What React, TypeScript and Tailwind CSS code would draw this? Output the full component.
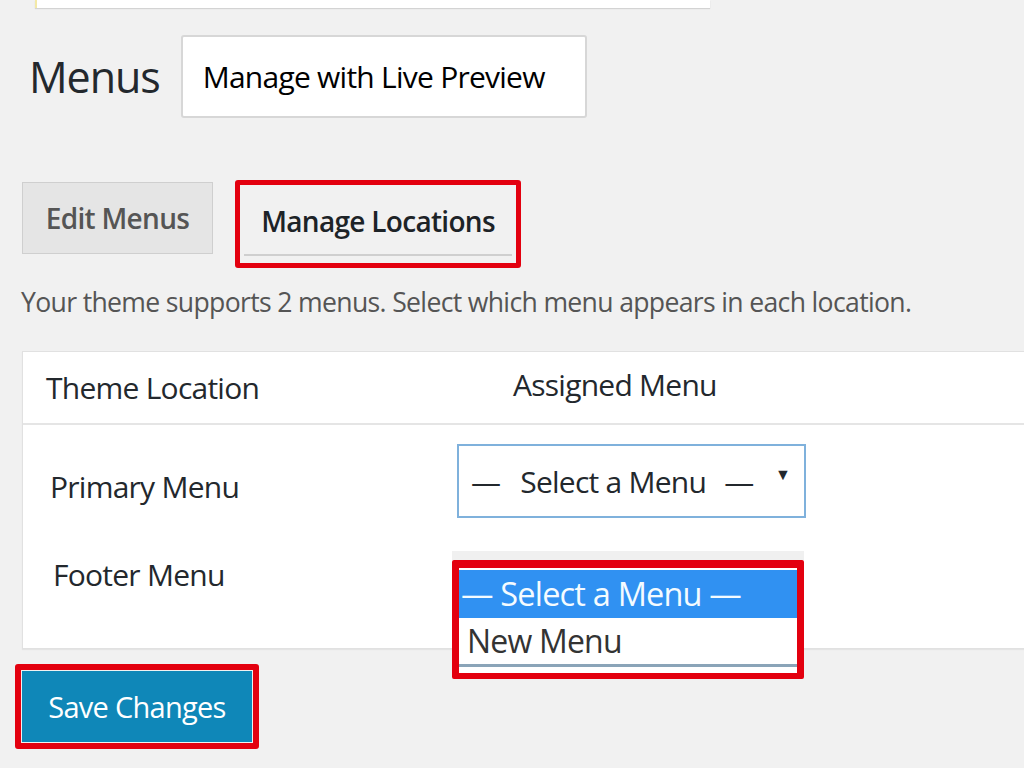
export default function App() {
  return (
    <div
      className="relative h-[768px] w-full overflow-hidden bg-[#f1f1f1] text-[#23282d]"
      style={{ fontFamily: '"Open Sans", "Noto Sans", sans-serif' }}
    >
      {/* notice strip cut off at the top */}
      <div className="ml-[35px] h-[8px] w-[675px] border-l-2 border-[#f3e9a6] bg-white shadow-[0_1px_1px_rgba(0,0,0,0.12)]" />

      {/* heading */}
      <div className="mt-[27px] flex items-center">
        <h1 className="ml-[29px] text-[43px] leading-none tracking-tight">Menus</h1>
        <button className="ml-[21px] flex h-[83px] w-[406px] items-center rounded-[3px] border-2 border-[#d7d7d7] bg-white pl-[20px] text-[30px] tracking-tight text-black">
          Manage with Live Preview
        </button>
      </div>

      {/* tabs */}
      <div className="mt-[62px] flex items-start">
        <div className="ml-[22px] mt-[2px] flex h-[72px] w-[191px] items-center justify-center border border-[#cfcfcf] bg-[#e5e5e5] text-[28px] font-semibold tracking-tight text-[#555]">
          Edit Menus
        </div>
        <div className="ml-[22px] flex h-[88px] w-[286px] flex-col rounded-[3px] border-[5px] border-[#e3000f] px-[4px] pt-[3px]">
          <div className="flex h-[68px] items-center justify-center border-b-2 border-[#cfcfcf] text-[28px] font-semibold tracking-tight text-[#1d2327]">
            Manage Locations
          </div>
        </div>
      </div>

      {/* description */}
      <p className="ml-[21px] mt-[16px] text-[26.6px] leading-[36px] tracking-tight text-[#555]">
        Your theme supports 2 menus. Select which menu appears in each location.
      </p>

      {/* locations table */}
      <div className="ml-[22px] mt-[31px] h-[298px] border-y border-l border-[#e1e1e1] bg-white shadow-[0_1px_1px_rgba(0,0,0,0.05)]">
        <div className="flex h-[73px] items-center border-b-2 border-[#e5e5e5] text-[30px] tracking-tight">
          <span className="ml-[23px] w-[467px]">Theme Location</span>
          <span className="-mt-[6px]">Assigned Menu</span>
        </div>
        <div className="flex h-[126px] items-start text-[30px] tracking-tight">
          <span className="ml-[27px] mt-[39px] w-[407px]">Primary Menu</span>
          <div className="mt-[19px] flex h-[74px] w-[349px] items-center border-2 border-[#7fb1dc] bg-white pl-[12px] pr-[14px]">
            <span>—</span>
            <span className="ml-[20px]">Select a Menu</span>
            <span className="ml-[18px]">—</span>
            <span className="ml-auto -mt-[14px] text-[16px]">▼</span>
          </div>
        </div>
        <div className="flex text-[30px] tracking-tight">
          <span className="ml-[30px] mt-[1px] w-[399px]">Footer Menu</span>
          <div className="relative h-[9px] w-[352px] bg-[#f0f0f0]">
            {/* open select list */}
            <div className="absolute left-0 top-[9px] w-[352px] rounded-[2px] border-x-[7px] border-b-[6px] border-t-[8px] border-[#e3000f] bg-white pt-[2px]">
              <div className="flex h-[48px] items-center bg-[#3091f2] pl-[2px] text-[32.5px] tracking-tight text-[#f4fbff]">
                — Select a Menu —
              </div>
              <div className="flex h-[46px] items-center pl-[8px] text-[32px] tracking-tight text-[#333]">
                New Menu
              </div>
              <div className="h-[3px] bg-[#8aa4b8]" />
              <div className="h-[6px]" />
            </div>
          </div>
        </div>
      </div>

      {/* save */}
      <div className="ml-[15px] mt-[15px] w-[244px] rounded-[3px] border-[6px] border-[#e3000f] p-[1px]">
        <button className="flex h-[71px] w-full items-center justify-center bg-[#0f87b8] text-[29px] tracking-tight text-white">
          Save Changes
        </button>
      </div>
    </div>
  );
}
